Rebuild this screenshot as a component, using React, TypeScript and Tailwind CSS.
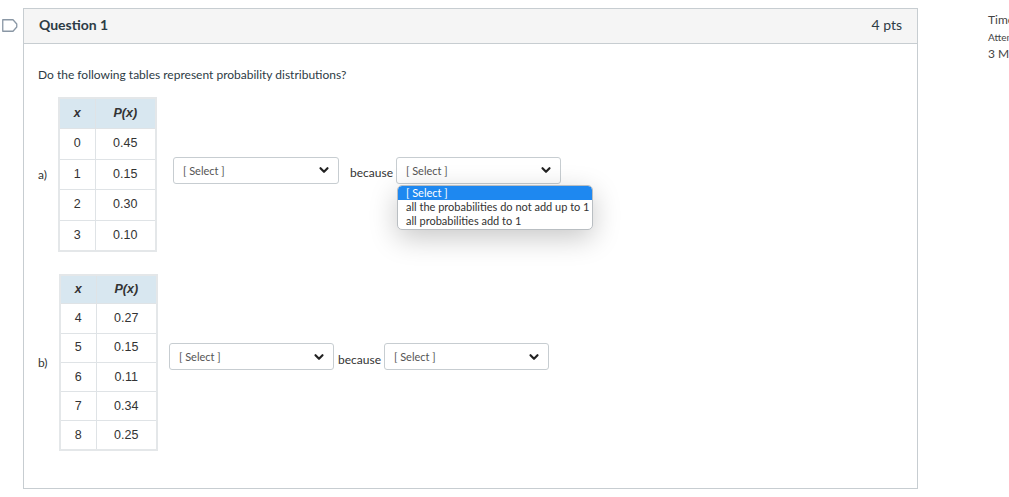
import { ChevronDown } from 'lucide-react';

const lato = { fontFamily: 'Lato, "Open Sans", sans-serif' };

function Select({ width, children }: { width: string; children?: React.ReactNode }) {
  return (
    <div className={`relative ${width} h-[27px] border border-[#c7cdd1] rounded-[3px] bg-white flex items-center justify-between pl-[9px] pr-[7px]`}>
      <span className="text-[11px] text-[#555] leading-none">[ Select ]</span>
      <ChevronDown className="w-[14px] h-[14px] text-[#222]" strokeWidth={3.75} />
      {children}
    </div>
  );
}

function ProbTable({ rows, rowH }: { rows: [string, string][]; rowH: string }) {
  return (
    <table
      className="border-collapse border-2 border-[#e4e7e9] text-[12.5px] text-[#333]"
      style={{ fontFamily: '"Liberation Sans", Arial, sans-serif' }}
    >
      <thead>
        <tr className={`${rowH} bg-[#d8e7f0]`}>
          <th className="w-[36px] border border-[#dfe3e6] font-bold italic">x</th>
          <th className="w-[61px] border border-[#dfe3e6] font-semibold italic">P(x)</th>
        </tr>
      </thead>
      <tbody>
        {rows.map(([x, p]) => (
          <tr key={x} className={`${rowH} bg-white`}>
            <td className="border border-[#dfe3e6] text-center font-normal">{x}</td>
            <td className="border border-[#dfe3e6] text-center">{p}</td>
          </tr>
        ))}
      </tbody>
    </table>
  );
}

export default function App() {
  return (
    <div className="w-[1009px] h-[497px] overflow-hidden bg-white text-[#2d3b45]" style={lato}>
      <div className="flex pt-[8px]">
        {/* flag icon */}
        <div className="w-[23px] shrink-0 pt-[11px] pl-[2px]">
          <svg width="16" height="13" viewBox="0 0 16 13" fill="none">
            <path d="M0.75 0.75 H11 L14.75 5 V8 L11 12.25 H0.75 Z" stroke="#8a97a5" strokeWidth="1.3" strokeLinejoin="round" />
          </svg>
        </div>

        {/* question box */}
        <div className="w-[895px] h-[481px] shrink-0 border border-[#c7cdd1] flex flex-col">
          <div className="h-[35px] bg-[#f5f5f5] border-b border-[#c7cdd1] flex items-center justify-between pl-[15px] pr-[15px] pb-[3px]">
            <span className="text-[14px] font-bold">Question 1</span>
            <span className="text-[14px]">4 pts</span>
          </div>

          <div className="pl-[14px] pt-[24px]">
            <p className="text-[12px] leading-[14px] text-[#2d3b45]">Do the following tables represent probability distributions?</p>

            <div className="mt-[15px] flex items-center">
              <span className="w-[20px] text-[12px] text-[#333] pt-[2px]">a)</span>
              <ProbTable rows={[['0', '0.45'], ['1', '0.15'], ['2', '0.30'], ['3', '0.10']]} rowH="h-[30.5px]" />
              <div className="ml-[16px] -mt-[8px] flex items-center">
                <Select width="w-[166px]" />
                <span className="ml-[11px] mr-[3px] text-[12px] text-[#333] pt-[6px]">because</span>
                <Select width="w-[165px]">
                  <div className="absolute left-0 top-[27px] w-[196px] whitespace-nowrap bg-white border border-[#b9bec2] rounded-[5px] shadow-[0_8px_28px_rgba(0,0,0,0.22)] text-[11px] leading-[14px] text-[#333] overflow-hidden">
                    <div className="bg-[#1e88f0] text-white px-[8px] rounded-t-[4px]">[ Select ]</div>
                    <div className="px-[8px]">all the probabilities do not add up to 1</div>
                    <div className="px-[8px] pb-[1px]">all probabilities add to 1</div>
                  </div>
                </Select>
              </div>
            </div>

            <div className="mt-[22px] flex items-center">
              <span className="w-[21px] text-[12px] text-[#333] pt-[2px]">b)</span>
              <ProbTable rows={[['4', '0.27'], ['5', '0.15'], ['6', '0.11'], ['7', '0.34'], ['8', '0.25']]} rowH="h-[29.25px]" />
              <div className="ml-[11px] -mt-[11px] flex items-center">
                <Select width="w-[165px]" />
                <span className="ml-[4px] mr-[3px] text-[12px] text-[#333] pt-[6px]">because</span>
                <Select width="w-[165px]" />
              </div>
            </div>
          </div>
        </div>

        {/* sidebar */}
        <div className="ml-[70px] pt-[5px] whitespace-nowrap text-[#444]">
          <div className="text-[12px] leading-[14px]">Time Elapsed:</div>
          <div className="text-[10px] leading-[12px] mt-[4px]">Attempt 1</div>
          <div className="text-[12px] leading-[14px] mt-[4px]">3 Minutes, 20 Seconds</div>
        </div>
      </div>
    </div>
  );
}
